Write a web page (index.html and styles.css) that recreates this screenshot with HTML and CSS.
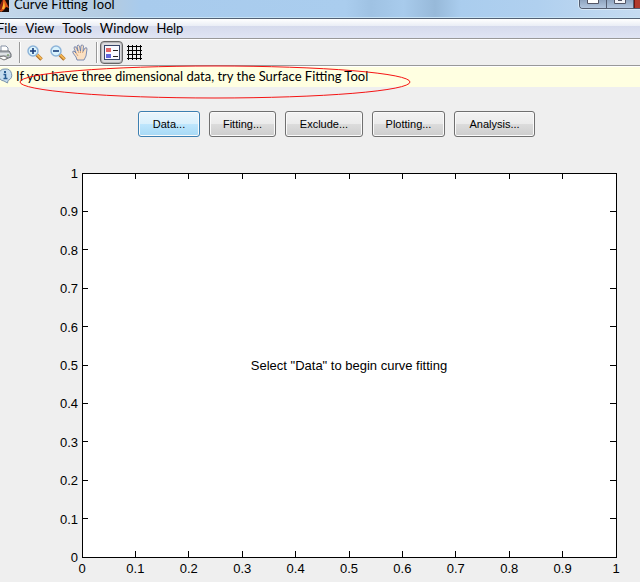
FILE: index.html
```
<!DOCTYPE html>
<html lang="en">
<head>
  <meta charset="UTF-8"/>
  <meta name="viewport" content="width=device-width, initial-scale=1.0"/>
  <title>Curve Fitting Tool</title>
  <link rel="stylesheet" href="styles.css">
</head>
<body>

  <!-- Title bar -->
  <header class="titlebar">
    <svg class="logo" width="9" height="12" viewBox="0 0 9 12">
      <rect width="9" height="12" fill="#140b0b"/>
      <path d="M0 6 L3 0 L5 0 L9 8 L6 7 L4 10 L1 12 L0 11 Z" fill="#d9541a"/>
      <path d="M0 5 L2 1 L3 0 L3 6 L1 10 L0 10 Z" fill="#8b2412"/>
      <path d="M4 1 L5 7 L4 9 L2 9 Z" fill="#ffb62e"/>
    </svg>
    <h1>Curve Fitting Tool</h1>
    <div class="controls">
      <button class="min" aria-label="Minimize"><svg width="12" height="4" viewBox="0 0 12 4"><path d="M.5 0V3.500H11.500V0" fill="#fff" stroke="#535666"/></svg></button>
      <button class="max" aria-label="Maximize"><svg width="12" height="4" viewBox="0 0 12 4"><path d="M.5 0V3.500H11.500V0" fill="#f5f5f8" stroke="#535666"/><path d="M4 0H8" stroke="#535666" stroke-width="2"/></svg></button>
      <button class="close" aria-label="Close"></button>
    </div>
  </header>

  <!-- Menu -->
  <nav class="menubar">
    <a href="#">File</a>
    <a href="#">View</a>
    <a href="#">Tools</a>
    <a href="#">Window</a>
    <a href="#">Help</a>
  </nav>

  <!-- Toolbar -->
  <div class="toolbar">
    <button class="tool print" aria-label="Print">
      <svg width="16" height="16" viewBox="0 0 16 16">
        <path d="M5 6V1H10L12 3V7" fill="#fff" stroke="#8591a5"/>
        <path d="M1 8L4 6H13L15 9V12L10 14L1 12Z" fill="#b4b9bf" stroke="#696d73"/>
        <path d="M3 8H13L14 10H4Z" fill="#dfe2e5"/>
        <path d="M2 12L8 11L12 13L8 15Z" fill="#fff" stroke="#777"/>
        <path d="M11 10H13" stroke="#5a8b42"/>
      </svg>
    </button>
    <span class="divider"></span>
    <button class="tool" aria-label="Zoom in">
      <svg width="16" height="16" viewBox="0 0 16 16">
        <path d="M9 9L14.500 14.500" stroke="#ad6d22" stroke-width="3.600"/>
        <path d="M9.500 9L14.500 14" stroke="#f3b653" stroke-width="2"/>
        <circle cx="6" cy="6" r="5" fill="#d9f2fc" stroke="#8db4d9" stroke-width="1.500"/>
        <path d="M3 6H9M6 3V9" stroke="#153a78" stroke-width="1.600"/>
      </svg>
    </button>
    <button class="tool" aria-label="Zoom out">
      <svg width="16" height="16" viewBox="0 0 16 16">
        <path d="M9 9L14.500 14.500" stroke="#ad6d22" stroke-width="3.600"/>
        <path d="M9.500 9L14.500 14" stroke="#f3b653" stroke-width="2"/>
        <circle cx="6" cy="6" r="5" fill="#d9f2fc" stroke="#8db4d9" stroke-width="1.500"/>
        <path d="M3 6H9" stroke="#153a78" stroke-width="1.600"/>
      </svg>
    </button>
    <button class="tool" aria-label="Pan">
      <svg width="17" height="17" viewBox="0 0 17 17">
        <path d="M5 16L4 13L1 9Q0 7 2 7L4 9L2 4Q2 2 4 3L6 7L5 2Q6 0 7.500 2L8.500 7L9 1.500Q10.500 0 11.500 2L11 7.500L13 4Q15 3 15 5L14 12L12 16Z" fill="#fbe0c2" stroke="#5f76a8" stroke-width=".8"/>
        <path d="M6 7L7 9M8.500 7V9M11 7.500L10.500 9M4 9L6 12" stroke="#d3a680" fill="none"/>
      </svg>
    </button>
    <span class="divider"></span>
    <button class="tool pressed" aria-label="Legend">
      <svg width="16" height="15" viewBox="0 0 16 15">
        <rect x=".5" y=".5" width="15" height="14" fill="#f7f9ff" stroke="#354468"/>
        <rect x="2" y="3" width="5" height="4" fill="#e56767"/>
        <rect x="2" y="9" width="5" height="4" fill="#6067de"/>
        <path d="M9 5.500H14M9 11.500H14" stroke="#222"/>
      </svg>
    </button>
    <button class="tool grid" aria-label="Grid">
      <svg width="15" height="15" viewBox="0 0 15 15">
        <path d="M1.500 0V15M5.500 0V15M9.500 0V15M13.500 0V15M0 1.500H15M0 5.500H15M0 9.500H15M0 13.500H15" stroke="#000"/>
      </svg>
    </button>
  </div>

  <!-- Hint -->
  <div class="hint">
    <svg class="info" width="14" height="16" viewBox="0 0 14 16">
      <path d="M6 1A6 6 0 0 1 9 12.500L8.500 15L5 13A6 6 0 0 1 6 1Z" fill="#c5ddef" stroke="#7992ab"/>
      <path d="M6 3V5" stroke="#245a91" stroke-width="2"/>
      <path d="M4.500 6.500H6.500V10.500M4.500 10.500H8.500" fill="none" stroke="#245a91" stroke-width="1.500"/>
    </svg>
    <span>If you have three dimensional data, try the Surface Fitting Tool</span>
    <svg class="marker" viewBox="0 0 392 34">
      <ellipse cx="196" cy="17" rx="195" ry="16" fill="none" stroke="#f51414"/>
    </svg>
  </div>

  <!-- Main content -->
  <main>
    <div class="actions">
      <button class="data">Data...</button>
      <button class="fitting">Fitting...</button>
      <button class="exclude">Exclude...</button>
      <button class="plotting">Plotting...</button>
      <button class="analysis">Analysis...</button>
    </div>
    <svg class="plot" id="plot">
      <rect width="100%" height="100%"/>
      <text class="message" x="50%" y="50%" dy="5">Select "Data" to begin curve fitting</text>
    </svg>
  </main>

  <script>
    const plot = document.getElementById("plot");
    let marks = "";

    // ticks on all four sides, labels on the left and bottom
    for (let i = 0; i <= 10; i++) {
      const pos = i * 10 + "%";
      const top = 100 - i * 10 + "%";
      const label = i / 10;
      marks += `
        <svg x="${pos}"><line y2="6"/></svg>
        <svg x="${pos}" y="100%"><line y2="-6"/><text class="x" y="16">${label}</text></svg>
        <svg y="${top}"><line x2="6"/><text class="y" x="-4" y="5">${label}</text></svg>
        <svg x="100%" y="${top}"><line x2="-6"/></svg>
      `;
    }
    plot.insertAdjacentHTML("beforeend", marks);
  </script>

</body>
</html>
```
FILE: styles.css
```
* {
  box-sizing: border-box;
  margin: 0; padding: 0;
}

body {
  background: #efefef;
  color: #000;
  font-family: Lato, "Noto Sans", sans-serif;
  font-size: 13px;
  overflow-x: hidden;
}

button {
  border: none;
  background: none;
}

svg {
  display: block;
}

.titlebar {
  display: flex;
  align-items: flex-start;
  height: 19px;
  background: linear-gradient(to right, #c3d7ea, #b2cbe2 18%, #a8cbed 22%, #aacdee 54%, #9fc2e3 58%, #a8cbec 63%, #97b9d9 68%, #aacdee 72%, #b0d0ef 84%, #c5dbf1);
  border-bottom: 1px solid #536174;
  box-shadow: inset 0 -1px #c8e3f5;
}

.titlebar h1 {
  margin: -5px 0 0 5px;
  font-size: 13px;
  font-weight: normal;
  line-height: 18px;
}

.controls {
  display: flex;
  width: 61px;
  height: 9px;
  margin-left: auto;
  border: 1px solid #535d70;
  border-top: none;
  border-right: none;
  border-radius: 0 0 0 4px;
  box-shadow: 0 1px #d9eaf8, -1px 0 #d9eaf8;
  overflow: hidden;
}

.controls button {
  display: flex;
  justify-content: center;
  width: 27px;
  background: linear-gradient(#8fa4bf, #b2c6de);
  border-right: 1px solid #535d70;
}

.controls .close {
  flex: 1;
  background: #b23a2b;
  border-right: none;
  border-left: 1px solid #72160f;
}

.menubar {
  display: flex;
  gap: 8px;
  height: 20px;
  padding-right: 8px;
  background: linear-gradient(#fff, #e9edf5 7px, #d5daec 7px, #e0e5f4);
  border-bottom: 1px solid #999;
}

.menubar a {
  color: #000;
  line-height: 19px;
  text-decoration: none;
}

.menubar a:first-child {
  margin-left: -3px;
}

.toolbar {
  display: flex;
  align-items: center;
  height: 27px;
  border-top: 1px solid #fff;
  border-bottom: 1px solid #999;
}

.tool {
  display: flex;
  align-items: center;
  justify-content: center;
  width: 23px;
  height: 23px;
}

.print {
  margin-left: -8px;
}

.divider {
  width: 2px;
  height: 21px;
  margin: 0 2px 0 4px;
  border-left: 1px solid #999;
  border-right: 1px solid #fff;
}

.pressed {
  background: #dcdcde;
  border: 1px solid #666;
  border-radius: 4px;
  box-shadow: inset 0 0 0 1px #b5b5b8;
}

.hint {
  position: relative;
  display: flex;
  height: 21px;
  background: #ffffe1;
  border-top: 1px solid #fff;
  line-height: 18px;
  white-space: nowrap;
}

.info {
  flex: none;
  margin: 1px 3px 0 -1px;
}

/* red ring around the hint text */
.marker {
  position: absolute;
  top: -2px;
  left: 19px;
  width: 392px;
  height: 34px;
}

main {
  padding: 24px 24px 24px 82px;
}

.actions {
  display: flex;
  gap: 9px;
  padding-left: 56px;
}

.actions button {
  height: 26px;
  font-family: "Liberation Sans", Arial, sans-serif;
  font-size: 11px;
  background: linear-gradient(#f3f3f3, #ebebeb 50%, #dcdcdc 50%, #cdcdcd);
  border: 1px solid #707070;
  border-radius: 3px;
  box-shadow: inset 0 0 0 1px #fafafa;
}

.actions .data {
  width: 62px;
  background: linear-gradient(#eaf6fd, #d9f0fc 50%, #bee6fd 50%, #a7d9f5);
  border-color: #3c7fb1;
}

.fitting { width: 67px; }
.exclude { width: 78px; }
.plotting { width: 73px; }
.analysis { width: 81px; }

.plot {
  width: 100%;
  height: 384px;
  margin-top: 36px;
  overflow: visible;
  font-family: "Liberation Sans", Arial, sans-serif;
  font-size: 13px;
}

.plot svg {
  overflow: visible;
}

.plot rect {
  fill: #fff;
  stroke: #000;
  shape-rendering: crispEdges;
}

.plot line {
  stroke: #000;
  shape-rendering: crispEdges;
}

.plot .x, .plot .message {
  text-anchor: middle;
}

.plot .y {
  text-anchor: end;
}
```
